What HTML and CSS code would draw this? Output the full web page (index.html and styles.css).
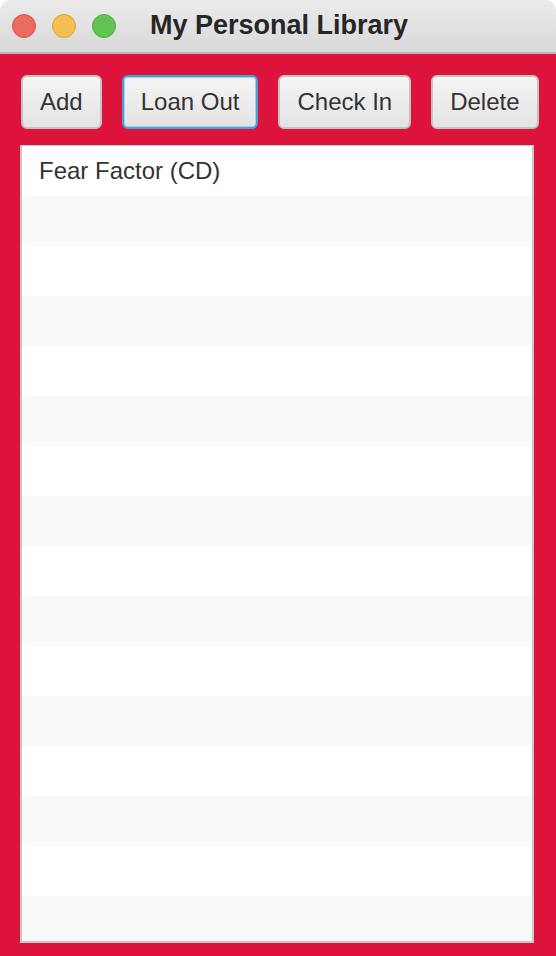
FILE: index.html
```html
<!DOCTYPE html>
<html lang="en">
<head>
<meta charset="utf-8">
<title>My Personal Library</title>
<link rel="stylesheet" href="styles.css">
</head>
<body>
<div class="window">
  <header class="titlebar">
    <div class="lights">
      <span class="light red"></span>
      <span class="light yellow"></span>
      <span class="light green"></span>
    </div>
    <h1 class="title">My Personal Library</h1>
  </header>
  <main class="content">
    <div class="toolbar">
      <button class="btn">Add</button>
      <button class="btn focused">Loan Out</button>
      <button class="btn">Check In</button>
      <button class="btn">Delete</button>
    </div>
    <ul class="list">
      <li class="row">Fear Factor (CD)</li>
      <li class="row"></li>
      <li class="row"></li>
      <li class="row"></li>
      <li class="row"></li>
      <li class="row"></li>
      <li class="row"></li>
      <li class="row"></li>
      <li class="row"></li>
      <li class="row"></li>
      <li class="row"></li>
      <li class="row"></li>
      <li class="row"></li>
      <li class="row"></li>
      <li class="row"></li>
      <li class="row"></li>
      <li class="row"></li>
    </ul>
  </main>
</div>
</body>
</html>
```
FILE: styles.css
```css
* { box-sizing: border-box; }
html, body {
  margin: 0;
  padding: 0;
  background: #ffffff;
}
body {
  font-family: "Liberation Sans", Arial, sans-serif;
}
.window {
  width: 556px;
  height: 956px;
  display: flex;
  flex-direction: column;
  border-radius: 11px 11px 0 0;
  overflow: hidden;
}
.titlebar {
  height: 54px;
  flex: none;
  position: relative;
  display: flex;
  align-items: center;
  justify-content: center;
  background: linear-gradient(#ebebeb, #d9d9d9);
  border-bottom: 2px solid #b8b8b8;
}
.lights {
  position: absolute;
  left: 12px;
  top: 14px;
  display: flex;
  gap: 16px;
}
.light {
  width: 24px;
  height: 24px;
  border-radius: 50%;
  display: block;
}
.red { background: #ec6a5e; border: 1px solid #d6524a; }
.yellow { background: #f4bf4f; border: 1px solid #d9a33a; }
.green { background: #61c554; border: 1px solid #4ea93f; }
.title {
  margin: 0 0 0 2px;
  font-size: 27px;
  font-weight: bold;
  color: #262626;
  padding-bottom: 2px;
}
.content {
  flex: 1;
  background: #dc143c;
  padding: 21px 22px 13px 20px;
  display: flex;
  flex-direction: column;
  gap: 16px;
  min-height: 0;
}
.toolbar {
  display: flex;
  gap: 20px;
  margin-left: 1px;
}
.btn {
  flex: none;
  white-space: nowrap;
  height: 54px;
  padding: 0 17px;
  font-family: "Liberation Sans", Arial, sans-serif;
  font-size: 24px;
  color: #333333;
  background: linear-gradient(#f5f5f5, #e3e3e3);
  border: 2px solid #c4c4c4;
  border-radius: 6px;
}
.btn.focused {
  border: 2px solid #3ea3dc;
  box-shadow: inset 0 0 0 1px #9fd1ee;
}
.list {
  flex: 1;
  margin: 0;
  padding: 0;
  list-style: none;
  background: #ffffff;
  border: 2px solid #c8c8c8;
  border-top-width: 1px;
  overflow: hidden;
  min-height: 0;
}
.row {
  height: 50px;
  line-height: 50px;
  padding-left: 17px;
  font-size: 24px;
  color: #333333;
  background: #ffffff;
}
.row:nth-child(even) {
  background: #f9f9f9;
}
```
